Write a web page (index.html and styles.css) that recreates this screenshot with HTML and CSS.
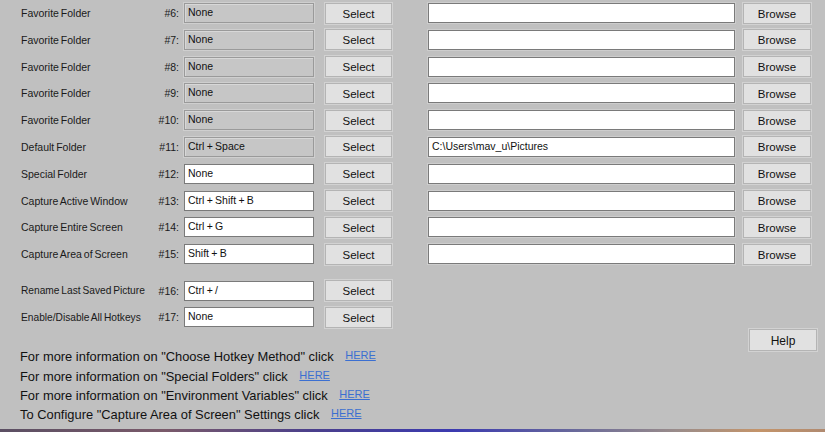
FILE: index.html
```html
<!DOCTYPE html>
<html>
<head>
<meta charset="utf-8">
<link rel="stylesheet" href="styles.css">
</head>
<body>
<div class="page">
  <div class="rows">
    <div class="row"><span class="lbl">Favorite Folder</span><span class="num">#6:</span><div class="field dis">None</div><div class="btn sel">Select</div><div class="path"></div><div class="btn brw">Browse</div></div>
    <div class="row"><span class="lbl">Favorite Folder</span><span class="num">#7:</span><div class="field dis">None</div><div class="btn sel">Select</div><div class="path"></div><div class="btn brw">Browse</div></div>
    <div class="row"><span class="lbl">Favorite Folder</span><span class="num">#8:</span><div class="field dis">None</div><div class="btn sel">Select</div><div class="path"></div><div class="btn brw">Browse</div></div>
    <div class="row"><span class="lbl">Favorite Folder</span><span class="num">#9:</span><div class="field dis">None</div><div class="btn sel">Select</div><div class="path"></div><div class="btn brw">Browse</div></div>
    <div class="row"><span class="lbl">Favorite Folder</span><span class="num">#10:</span><div class="field dis">None</div><div class="btn sel">Select</div><div class="path"></div><div class="btn brw">Browse</div></div>
    <div class="row"><span class="lbl">Default Folder</span><span class="num">#11:</span><div class="field dis">Ctrl + Space</div><div class="btn sel">Select</div><div class="path">C:\Users\mav_u\Pictures</div><div class="btn brw">Browse</div></div>
    <div class="row"><span class="lbl">Special Folder</span><span class="num">#12:</span><div class="field">None</div><div class="btn sel">Select</div><div class="path"></div><div class="btn brw">Browse</div></div>
    <div class="row"><span class="lbl">Capture Active Window</span><span class="num">#13:</span><div class="field">Ctrl + Shift + B</div><div class="btn sel">Select</div><div class="path"></div><div class="btn brw">Browse</div></div>
    <div class="row"><span class="lbl">Capture Entire Screen</span><span class="num">#14:</span><div class="field">Ctrl + G</div><div class="btn sel">Select</div><div class="path"></div><div class="btn brw">Browse</div></div>
    <div class="row"><span class="lbl">Capture Area of Screen</span><span class="num">#15:</span><div class="field">Shift + B</div><div class="btn sel">Select</div><div class="path"></div><div class="btn brw">Browse</div></div>
  </div>
  <div class="rows rows2">
    <div class="row"><span class="lbl small">Rename Last Saved Picture</span><span class="num">#16:</span><div class="field">Ctrl + /</div><div class="btn sel">Select</div></div>
    <div class="row"><span class="lbl small">Enable/Disable All Hotkeys</span><span class="num">#17:</span><div class="field">None</div><div class="btn sel">Select</div></div>
  </div>
  <div class="foot">
    <div class="info">
      <div class="line">For more information on "Choose Hotkey Method" click <a class="here">HERE</a></div>
      <div class="line">For more information on "Special Folders" click <a class="here">HERE</a></div>
      <div class="line">For more information on "Environment Variables" click <a class="here">HERE</a></div>
      <div class="line">To Configure "Capture Area of Screen" Settings click <a class="here">HERE</a></div>
    </div>
    <div class="btn help">Help</div>
  </div>
  <div class="strip"></div>
</div>
</body>
</html>
```
FILE: styles.css
```css
html, body {
  margin: 0;
  padding: 0;
  background: #c0c0c0;
}
.page {
  height: 432px;
  display: flex;
  flex-direction: column;
  font-family: "Liberation Sans", Arial, sans-serif;
  color: #1a1a1a;
  overflow: hidden;
}
.rows {
  display: flex;
  flex-direction: column;
  gap: 6.8px;
  padding: 3px 0 0 21px;
}
.rows2 {
  padding-top: 16.4px;
}
.row {
  display: flex;
  align-items: center;
  height: 20px;
  font-size: 10.5px;
  word-spacing: -1px;
}
.lbl {
  width: 137px;
}
.lbl.small {
  font-size: 10.2px;
}
.num {
  width: 21px;
  text-align: right;
}
.field {
  box-sizing: border-box;
  width: 130px;
  height: 20px;
  margin-left: 5px;
  background: #fff;
  border: 1px solid #7a7a7a;
  padding: 1px 3px;
  line-height: 15px;
  white-space: nowrap;
  color: #111;
  word-spacing: -0.6px;
}
.field.dis {
  background: #c6c6c6;
  border: 1px solid #9a9a9a;
  box-shadow: inset 1px 1px 0 #d8d8d8, 0 0 0 1px #cfcfcf;
}
.btn {
  box-sizing: border-box;
  height: 21px;
  background: #e1e1e1;
  border: 1px solid #b4b4b4;
  box-shadow: 0 0 0 1px #d2d2d2;
  display: flex;
  align-items: center;
  justify-content: center;
  font-size: 11.5px;
  color: #111;
  padding-top: 1px;
  word-spacing: normal;
}
.sel {
  width: 67px;
  margin-left: 11px;
}
.path {
  box-sizing: border-box;
  width: 307px;
  height: 20px;
  margin-left: 36px;
  background: #fff;
  border: 1px solid #7a7a7a;
  box-shadow: 0 0 0 1px #cdcdcd;
  padding: 1px 3px;
  line-height: 15px;
  color: #111;
}
.brw {
  width: 68px;
  margin-left: 8px;
}
.foot {
  display: flex;
  padding: 2px 0 0 20px;
}
.info {
  flex: 1;
  padding-top: 17px;
  font-size: 12.9px;
  color: #111;
}
.line {
  height: 19.2px;
  line-height: 19px;
  white-space: nowrap;
}
.here {
  font-size: 11px;
  color: #3b6fd1;
  text-decoration: underline;
  margin-left: 8px;
  vertical-align: 2px;
}
.help {
  width: 68px;
  height: 22px;
  margin-right: 8px;
  align-self: flex-start;
  font-size: 12px;
}
.strip {
  margin-top: auto;
  height: 3px;
  background: linear-gradient(90deg, #5b4f63 0%, #7a5a6a 20%, #4a3f8c 38%, #3b3ab0 55%, #6a6a9a 70%, #9a8c8a 82%, #c4946a 92%, #b08a70 100%);
}
```
